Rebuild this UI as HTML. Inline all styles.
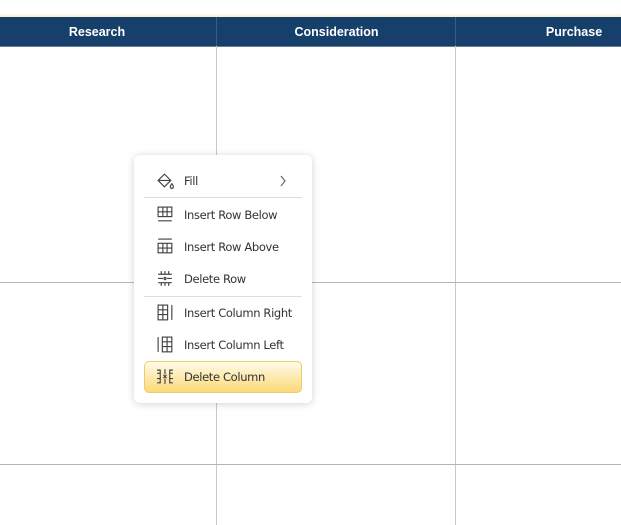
<!DOCTYPE html><html><head><style>
body{margin:0;width:621px;height:525px;background:#fff;position:relative;overflow:hidden;font-family:"Liberation Sans",sans-serif}
.top{position:absolute;left:0;top:13px;width:621px;height:4px;background:linear-gradient(#fff,#fbeec9)}
.hdr{position:absolute;top:17px;left:0;width:621px;height:29px;background:#173f6b;border-bottom:1px solid #6a7f96;overflow:hidden}
.hdr div{position:absolute;top:0;height:29px;line-height:31px;color:#fff;font-weight:bold;font-size:12.5px;text-align:center}
.v{position:absolute;width:1px;background:#c9c9c9}
.h{position:absolute;height:1px;background:#b5b5b5;left:0;width:621px}
.menu{position:absolute;left:134px;top:155px;width:178px;height:248px;background:#fff;border-radius:6px;box-shadow:0 1px 8px rgba(0,0,0,.18)}
.it{position:absolute;left:10px;width:158px;height:32px;font-size:11.5px;color:#333;font-family:"DejaVu Sans","Liberation Sans",sans-serif;letter-spacing:-.35px}
.it span{position:absolute;left:40px;top:9px}
.it svg{position:absolute;left:12px;top:7px}
.sep{position:absolute;left:10px;width:158px;height:1px;background:#ddd}
.sel{background:linear-gradient(#fffbea,#fbd977);border:1px solid #efcc6a;border-radius:5px;box-sizing:border-box}
</style></head><body>
<div class="top"></div>
<div class="hdr"><div style="left:-22px;width:238px">Research</div><div style="left:216px;width:239px;border-left:1px solid #3a5d83">Consideration</div><div style="left:455px;width:236px;border-left:1px solid #3a5d83">Purchase</div></div>
<div class="v" style="left:216px;top:46px;height:479px"></div>
<div class="v" style="left:455px;top:46px;height:479px"></div>
<div class="h" style="top:282px"></div>
<div class="h" style="top:464px"></div>
<div class="menu">
<div class="it" style="top:10px"><svg width="19" height="18" viewBox="0 0 18 17" fill="none" stroke="#444" stroke-width="1.1"><path d="M2 8l6-6 6 6-6 6z M2 8h12"/><path d="M15 11c-1 1.5-1.5 2-1.5 3a1.5 1.5 0 003 0c0-1-.5-1.5-1.5-3z"/></svg><span>Fill</span><svg width="8" height="12" viewBox="0 0 8 12" style="left:135px;top:10px" fill="none" stroke="#666" stroke-width="1.2"><path d="M2 1l4 5-4 5"/></svg></div>
<div class="sep" style="top:42px"></div>
<div class="it" style="top:44px"><svg width="19" height="18" viewBox="0 0 18 17" fill="none" stroke="#444" stroke-width="1.1"><rect x="2" y="1" width="13" height="9"/><path d="M2 5.5h13M6.5 1v9M10.5 1v9M2 14h13"/></svg><span>Insert Row Below</span></div>
<div class="it" style="top:76px"><svg width="19" height="18" viewBox="0 0 18 17" fill="none" stroke="#444" stroke-width="1.1"><path d="M2 1h13"/><rect x="2" y="5" width="13" height="9"/><path d="M2 9.5h13M6.5 5v9M10.5 5v9"/></svg><span>Insert Row Above</span></div>
<div class="it" style="top:108px"><svg width="19" height="18" viewBox="0 0 18 17" fill="none" stroke="#444" stroke-width="1.1"><path d="M2 4h13M5 1v3M8.5 1v3M12 1v3M2 8h5M10 8h5M7.5 6.5l2 3M9.5 6.5l-2 3M2 12h13M5 12v3M8.5 12v3M12 12v3"/></svg><span>Delete Row</span></div>
<div class="sep" style="top:141px"></div>
<div class="it" style="top:142px"><svg width="19" height="18" viewBox="0 0 18 17" fill="none" stroke="#444" stroke-width="1.1"><rect x="2" y="1" width="9" height="14"/><path d="M2 5.5h9M2 10h9M6.5 1v14M15 1v14"/></svg><span>Insert Column Right</span></div>
<div class="it" style="top:174px"><svg width="19" height="18" viewBox="0 0 18 17" fill="none" stroke="#444" stroke-width="1.1"><path d="M2 1v14"/><rect x="6" y="1" width="9" height="14"/><path d="M6 5.5h9M6 10h9M10.5 1v14"/></svg><span>Insert Column Left</span></div>
<div class="it sel" style="top:206px"><svg width="19" height="18" viewBox="0 0 18 17" fill="none" stroke="#444" stroke-width="1.1" style="left:11px;top:6px"><path d="M1 2h3v12H1M4 5H1M4 10H1M8.5 1v5M8.5 10v5M7 6.5l3 3M10 6.5l-3 3M16 2h-3v12h3M13 5h3M13 10h3"/></svg><span style="left:39px;top:8px">Delete Column</span></div>
</div>
</body></html>
